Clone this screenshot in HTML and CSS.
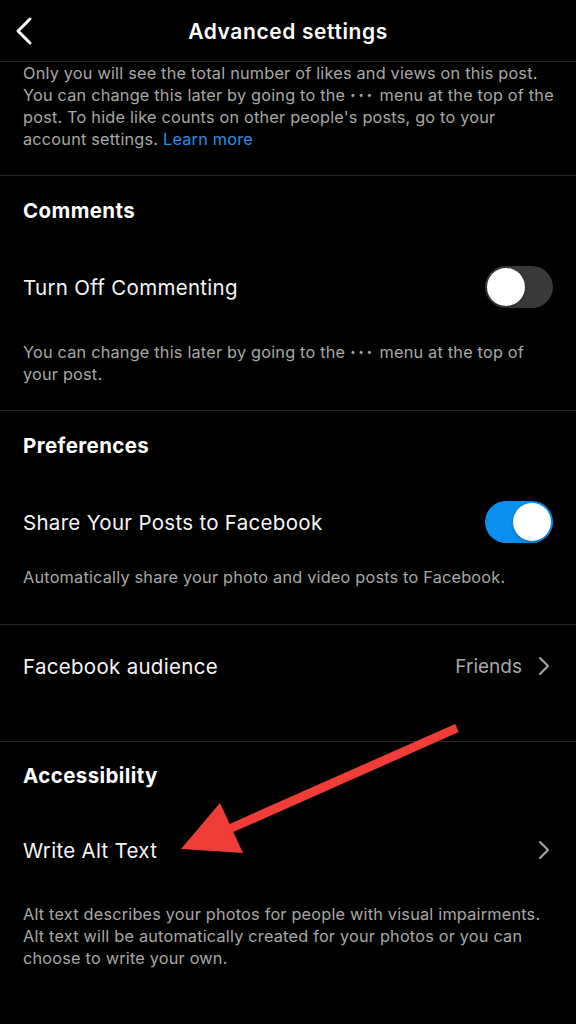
FILE: index.html
```html
<!DOCTYPE html>
<html lang="en">
<head>
<meta charset="utf-8">
<title>Advanced settings</title>
<link rel="stylesheet" href="styles.css">
</head>
<body>
<div class="screen">
  <header class="topbar">
    <svg class="back" width="20" height="30" viewBox="0 0 20 30"><path d="M15 3 L3 15 L15 27" fill="none" stroke="#fff" stroke-width="3" stroke-linecap="round" stroke-linejoin="round"/></svg>
    <h1 class="title">Advanced settings</h1>
  </header>

  <section class="block intro">
    <p class="help">Only you will see the total number of likes and views on this post. You can change this later by going to the <span class="dots">···</span> menu at the top of the post. To hide like counts on other people's posts, go to your account settings. <span class="link">Learn more</span></p>
  </section>

  <section class="block comments">
    <h2 class="heading">Comments</h2>
    <div class="row">
      <span class="label">Turn Off Commenting</span>
      <span class="toggle"><span class="knob"></span></span>
    </div>
    <p class="help help-comments">You can change this later by going to the <span class="dots">···</span> menu at the top of your post.</p>
  </section>

  <section class="block prefs">
    <h2 class="heading">Preferences</h2>
    <div class="row">
      <span class="label">Share Your Posts to Facebook</span>
      <span class="toggle on"><span class="knob"></span></span>
    </div>
    <p class="help help-prefs">Automatically share your photo and video posts to Facebook.</p>
  </section>

  <section class="block audience">
    <div class="row">
      <span class="label">Facebook audience</span>
      <span class="value">Friends <svg class="chev" width="12" height="20" viewBox="0 0 12 20"><path d="M2 2 L10 10 L2 18" fill="none" stroke="#a8a8a8" stroke-width="2" stroke-linecap="round" stroke-linejoin="round"/></svg></span>
    </div>
  </section>

  <section class="block access">
    <h2 class="heading">Accessibility</h2>
    <div class="row">
      <span class="label">Write Alt Text</span>
      <span class="value"><svg class="chev" width="12" height="20" viewBox="0 0 12 20"><path d="M2 2 L10 10 L2 18" fill="none" stroke="#a8a8a8" stroke-width="2" stroke-linecap="round" stroke-linejoin="round"/></svg></span>
    </div>
    <p class="help help-access">Alt text describes your photos for people with visual impairments. Alt text will be automatically created for your photos or you can choose to write your own.</p>
  </section>

  <svg class="arrow" width="576" height="1024" viewBox="0 0 576 1024">
    <polygon points="181,849 220,803 229.7,823.9 455.2,723.9 458.8,732.1 233.3,832.1 243,853" fill="#f03d38"/>
  </svg>
</div>
</body>
</html>
```

FILE: styles.css
```css
* { box-sizing: border-box; }
html, body {
  margin: 0;
  padding: 0;
  background: #000;
}
body {
  font-family: Inter, "Noto Sans", "Liberation Sans", sans-serif;
  color: #f5f5f5;
}
.screen {
  position: relative;
  width: 576px;
  min-height: 1024px;
  overflow: hidden;
}
.topbar {
  height: 62px;
  padding-top: 2px;
  border-bottom: 1px solid #1f1f1f;
  display: flex;
  align-items: center;
  justify-content: center;
  position: relative;
}
.back {
  position: absolute;
  left: 15px;
  top: 16px;
}
.title {
  margin: 0;
  font-size: 21px;
  font-weight: 600;
  color: #fff;
  letter-spacing: 0.6px;
}
.block {
  border-bottom: 1px solid #262626;
  padding: 0 20px 0 23px;
}
.help {
  margin: 0;
  font-size: 16.3px;
  line-height: 22px;
  color: #a8a8a8;
  letter-spacing: 0.2px;
}
.dots {
  font-weight: 800;
  letter-spacing: 2.5px;
}
.link { color: #2a8fe6; }
.intro { padding-top: 0; padding-bottom: 25px; }
.heading {
  margin: 0;
  font-size: 20.5px;
  line-height: 24px;
  font-weight: 700;
  color: #fff;
  letter-spacing: 0.4px;
}
.row {
  height: 56px;
  display: flex;
  align-items: center;
  justify-content: space-between;
}
.label {
  font-size: 20.5px;
  color: #f5f5f5;
  letter-spacing: 0.3px;
}
.value {
  display: flex;
  align-items: center;
  gap: 16px;
  font-size: 19px;
  color: #a8a8a8;
  margin-right: 6px;
}
.toggle {
  width: 68px;
  height: 42px;
  border-radius: 21px;
  background: #39393c;
  padding: 2px;
  display: flex;
  align-items: center;
  margin-right: 3px;
}
.toggle.on {
  background: #0a8ff0;
  justify-content: flex-end;
}
.knob {
  width: 38px;
  height: 38px;
  border-radius: 50%;
  background: #fff;
  box-shadow: 0 1px 3px rgba(0,0,0,0.3);
}
.comments { padding-top: 23px; padding-bottom: 25px; }
.comments .heading { margin-bottom: 36px; }
.help-comments { margin-top: 26px; }
.prefs { padding-top: 23px; padding-bottom: 36px; }
.prefs .heading { margin-bottom: 36px; }
.help-prefs { margin-top: 16px; }
.audience { padding-top: 13px; padding-bottom: 47px; }
.access { padding-top: 22px; border-bottom: none; }
.access .heading { margin-bottom: 34px; }
.help-access { margin-top: 25px; }
.arrow {
  position: absolute;
  left: 0;
  top: 0;
  pointer-events: none;
}
```
